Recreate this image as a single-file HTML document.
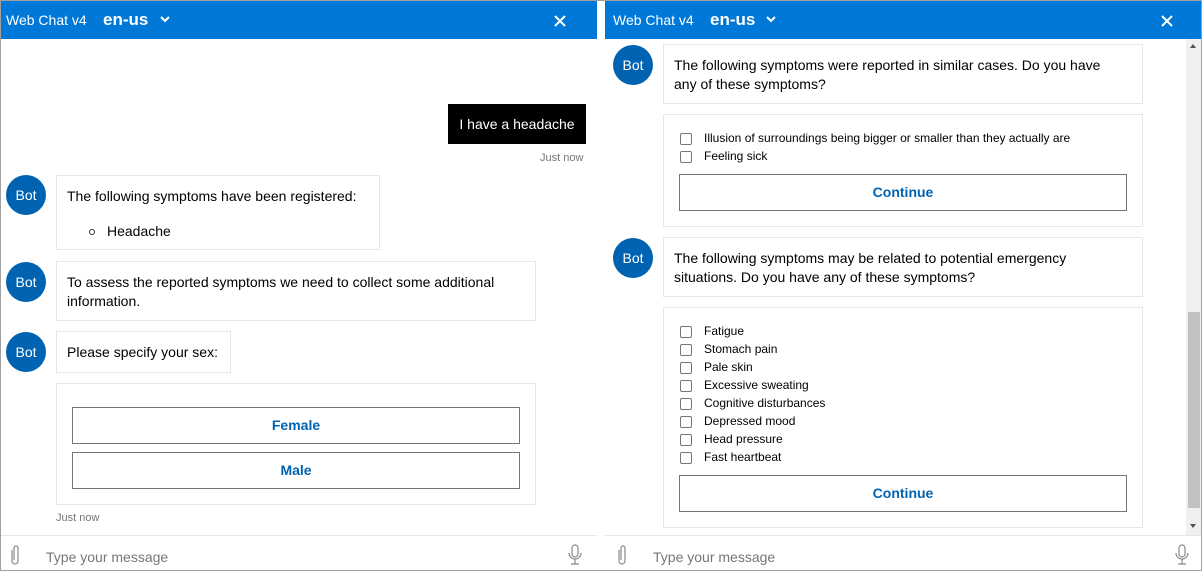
<!DOCTYPE html>
<html><head><meta charset="utf-8"><style>
*{box-sizing:border-box;margin:0;padding:0}
body{width:1202px;height:571px;position:relative;background:#fff;font-family:"Liberation Sans",sans-serif;overflow:hidden;color:#000}
.a{position:absolute}
.hdr{background:#0078d7;color:#fff;height:38px;top:1px}
.t1{font-size:14px;top:12px}
.t2{font-size:17px;font-weight:bold;top:10px}
.bub{border:1px solid #e6e6e6;background:#fff;font-size:14px;line-height:19px}
.av{width:40px;height:40px;border-radius:50%;background:#0063b1;color:#fff;font-size:14px;text-align:center;line-height:40px}
.btn{border:1px solid #767676;background:#fff;color:#0063b1;font-weight:bold;font-size:14px;text-align:center}
.cb{width:12px;height:12px;border:1px solid #767676;border-radius:2px}
.lbl{font-size:12px}
.ts{font-size:11px;color:#767676}
.inp{font-size:14px;color:#767676}
</style></head><body>
<div class="a" style="left:0;top:0;width:1202px;height:571px;border:1px solid #a0a0a0"></div>
<div class="a hdr" style="left:1px;width:596px"></div>
<div class="a t1" style="left:6px;color:#fff">Web Chat v4</div>
<div class="a t2" style="left:103px;color:#fff">en-us</div>
<svg class="a" style="left:159px;top:15px" width="12" height="8"><path d="M2 2l4 4 4-4" stroke="#fff" stroke-width="2" fill="none"/></svg>
<svg class="a" style="left:554px;top:15px" width="12" height="12"><path d="M1 1l10 10M11 1L1 11" stroke="#fff" stroke-width="2"/></svg>
<div class="a hdr" style="left:605px;width:596px"></div>
<div class="a t1" style="left:613px;color:#fff">Web Chat v4</div>
<div class="a t2" style="left:710px;color:#fff">en-us</div>
<svg class="a" style="left:765px;top:15px" width="12" height="8"><path d="M2 2l4 4 4-4" stroke="#fff" stroke-width="2" fill="none"/></svg>
<svg class="a" style="left:1161px;top:15px" width="12" height="12"><path d="M1 1l10 10M11 1L1 11" stroke="#fff" stroke-width="2"/></svg>

<div class="a" style="left:448px;top:104px;width:138px;height:40px;background:#000;color:#fff;font-size:14px;line-height:40px;text-align:center">I have a headache</div>
<div class="a ts" style="left:540px;top:152px">Just now</div>
<div class="a av" style="left:6px;top:175px">Bot</div>
<div class="a bub" style="left:56px;top:175px;width:324px;height:75px;padding:11px 10px">The following symptoms have been registered:
<div style="margin-top:16px;padding-left:40px;position:relative"><span style="position:absolute;left:22px;top:7px;width:6px;height:6px;border:1px solid #333;border-radius:50%"></span>Headache</div></div>
<div class="a av" style="left:6px;top:262px">Bot</div>
<div class="a bub" style="left:56px;top:261px;width:480px;height:60px;padding:11px 10px">To assess the reported symptoms we need to collect some additional information.</div>
<div class="a av" style="left:6px;top:332px">Bot</div>
<div class="a bub" style="left:56px;top:331px;width:175px;height:42px;padding:11px 10px">Please specify your sex:</div>
<div class="a bub" style="left:56px;top:383px;width:480px;height:122px"></div>
<div class="a btn" style="left:72px;top:407px;width:448px;height:37px;line-height:35px">Female</div>
<div class="a btn" style="left:72px;top:452px;width:448px;height:37px;line-height:35px">Male</div>
<div class="a ts" style="left:56px;top:512px">Just now</div>

<div class="a" style="left:1px;top:535px;width:596px;height:1px;background:#e6e6e6"></div>
<svg class="a" style="left:9px;top:544px" width="12" height="22"><path d="M3 6v11a3 3 0 0 0 6 0V4a2 2 0 0 0-4 0v12" stroke="#888" stroke-width="1.2" fill="none"/></svg>
<div class="a inp" style="left:46px;top:549px">Type your message</div>
<svg class="a" style="left:567px;top:544px" width="16" height="22"><rect x="5" y="1" width="6" height="12" rx="3" stroke="#888" fill="none" stroke-width="1.2"/><path d="M2 9a6 6 0 0 0 12 0M8 15v5M4 20h8" stroke="#888" fill="none" stroke-width="1.2"/></svg>

<div class="a av" style="left:613px;top:45px">Bot</div>
<div class="a bub" style="left:663px;top:44px;width:480px;height:60px;padding:11px 30px 11px 10px">The following symptoms were reported in similar cases. Do you have any of these symptoms?</div>
<div class="a bub" style="left:663px;top:114px;width:480px;height:113px"></div>
<div class="a cb" style="left:680px;top:133px"></div><div class="a lbl" style="left:704px;top:131px">Illusion of surroundings being bigger or smaller than they actually are</div>
<div class="a cb" style="left:680px;top:151px"></div><div class="a lbl" style="left:704px;top:149px">Feeling sick</div>
<div class="a btn" style="left:679px;top:174px;width:448px;height:37px;line-height:35px">Continue</div>
<div class="a av" style="left:613px;top:238px">Bot</div>
<div class="a bub" style="left:663px;top:237px;width:480px;height:60px;padding:11px 10px">The following symptoms may be related to potential emergency situations. Do you have any of these symptoms?</div>
<div class="a bub" style="left:663px;top:307px;width:480px;height:221px"></div>
<div class="a cb" style="left:680px;top:326px"></div><div class="a lbl" style="left:704px;top:324px">Fatigue</div>
<div class="a cb" style="left:680px;top:344px"></div><div class="a lbl" style="left:704px;top:342px">Stomach pain</div>
<div class="a cb" style="left:680px;top:362px"></div><div class="a lbl" style="left:704px;top:360px">Pale skin</div>
<div class="a cb" style="left:680px;top:380px"></div><div class="a lbl" style="left:704px;top:378px">Excessive sweating</div>
<div class="a cb" style="left:680px;top:398px"></div><div class="a lbl" style="left:704px;top:396px">Cognitive disturbances</div>
<div class="a cb" style="left:680px;top:416px"></div><div class="a lbl" style="left:704px;top:414px">Depressed mood</div>
<div class="a cb" style="left:680px;top:434px"></div><div class="a lbl" style="left:704px;top:432px">Head pressure</div>
<div class="a cb" style="left:680px;top:452px"></div><div class="a lbl" style="left:704px;top:450px">Fast heartbeat</div>
<div class="a btn" style="left:679px;top:475px;width:448px;height:37px;line-height:35px">Continue</div>
<div class="a" style="left:1186px;top:39px;width:15px;height:496px;background:#f0f0f0"></div>
<div class="a" style="left:1188px;top:312px;width:12px;height:196px;background:#c1c1c1"></div>
<div class="a" style="left:1190px;top:44px;width:0;height:0;border-left:3px solid transparent;border-right:3px solid transparent;border-bottom:4px solid #505050"></div>
<div class="a" style="left:1190px;top:524px;width:0;height:0;border-left:3px solid transparent;border-right:3px solid transparent;border-top:4px solid #505050"></div>

<div class="a" style="left:605px;top:535px;width:596px;height:1px;background:#e6e6e6"></div>
<svg class="a" style="left:616px;top:544px" width="12" height="22"><path d="M3 6v11a3 3 0 0 0 6 0V4a2 2 0 0 0-4 0v12" stroke="#888" stroke-width="1.2" fill="none"/></svg>
<div class="a inp" style="left:653px;top:549px">Type your message</div>
<svg class="a" style="left:1174px;top:544px" width="16" height="22"><rect x="5" y="1" width="6" height="12" rx="3" stroke="#888" fill="none" stroke-width="1.2"/><path d="M2 9a6 6 0 0 0 12 0M8 15v5M4 20h8" stroke="#888" fill="none" stroke-width="1.2"/></svg>
</body></html>
